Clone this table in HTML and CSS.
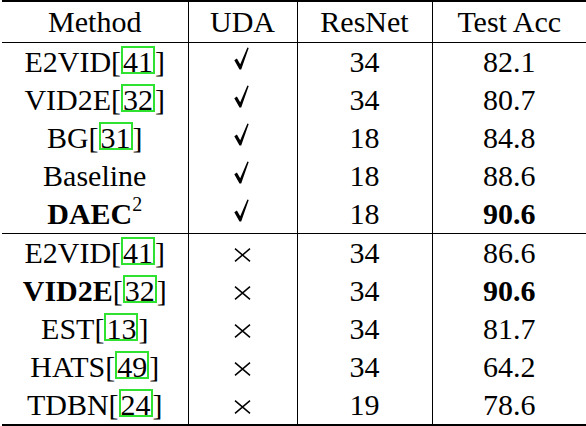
FILE: index.html
```html
<!DOCTYPE html>
<html lang="en">
<head>
    <meta charset="UTF-8">
    <title>Test accuracy</title>
    <link rel="stylesheet" href="styles.css">
</head>
<body>

<!-- Results table -->
<table class="results">
    <colgroup>
        <col class="col-method">
        <col class="col-uda">
        <col class="col-resnet">
        <col class="col-acc">
    </colgroup>
    <thead>
        <tr><th>Method</th><th>UDA</th><th>ResNet</th><th>Test Acc</th></tr>
    </thead>

    <!-- With UDA -->
    <tbody>
        <tr>
            <td>E2VID[<span class="cite">41</span>]</td>
            <td><svg class="tick" width="15" height="23" viewBox="0 0 15 23"><path d="M0.3 13.2 L2.9 11.6 L6.2 17.2 L13.4 0.4 L14.7 1.0 L7.2 22.6 L5.5 22.6 Z"/></svg></td>
            <td>34</td><td>82.1</td>
        </tr>
        <tr>
            <td>VID2E[<span class="cite">32</span>]</td>
            <td><svg class="tick" width="15" height="23" viewBox="0 0 15 23"><path d="M0.3 13.2 L2.9 11.6 L6.2 17.2 L13.4 0.4 L14.7 1.0 L7.2 22.6 L5.5 22.6 Z"/></svg></td>
            <td>34</td><td>80.7</td>
        </tr>
        <tr>
            <td>BG[<span class="cite">31</span>]</td>
            <td><svg class="tick" width="15" height="23" viewBox="0 0 15 23"><path d="M0.3 13.2 L2.9 11.6 L6.2 17.2 L13.4 0.4 L14.7 1.0 L7.2 22.6 L5.5 22.6 Z"/></svg></td>
            <td>18</td><td>84.8</td>
        </tr>
        <tr>
            <td>Baseline</td>
            <td><svg class="tick" width="15" height="23" viewBox="0 0 15 23"><path d="M0.3 13.2 L2.9 11.6 L6.2 17.2 L13.4 0.4 L14.7 1.0 L7.2 22.6 L5.5 22.6 Z"/></svg></td>
            <td>18</td><td>88.6</td>
        </tr>
        <tr>
            <td><b>DAEC</b><sup class="pow">2</sup></td>
            <td><svg class="tick" width="15" height="23" viewBox="0 0 15 23"><path d="M0.3 13.2 L2.9 11.6 L6.2 17.2 L13.4 0.4 L14.7 1.0 L7.2 22.6 L5.5 22.6 Z"/></svg></td>
            <td>18</td><td><b>90.6</b></td>
        </tr>
    </tbody>

    <!-- Without UDA -->
    <tbody>
        <tr>
            <td>E2VID[<span class="cite">41</span>]</td>
            <td><svg class="cross" width="17" height="14" viewBox="0 0 17 14"><path d="M1 0.6 L16 13.4 M16 0.6 L1 13.4"/></svg></td>
            <td>34</td><td>86.6</td>
        </tr>
        <tr>
            <td><b>VID2E</b>[<span class="cite">32</span>]</td>
            <td><svg class="cross" width="17" height="14" viewBox="0 0 17 14"><path d="M1 0.6 L16 13.4 M16 0.6 L1 13.4"/></svg></td>
            <td>34</td><td><b>90.6</b></td>
        </tr>
        <tr>
            <td>EST[<span class="cite">13</span>]</td>
            <td><svg class="cross" width="17" height="14" viewBox="0 0 17 14"><path d="M1 0.6 L16 13.4 M16 0.6 L1 13.4"/></svg></td>
            <td>34</td><td>81.7</td>
        </tr>
        <tr>
            <td>HATS[<span class="cite">49</span>]</td>
            <td><svg class="cross" width="17" height="14" viewBox="0 0 17 14"><path d="M1 0.6 L16 13.4 M16 0.6 L1 13.4"/></svg></td>
            <td>34</td><td>64.2</td>
        </tr>
        <tr>
            <td>TDBN[<span class="cite">24</span>]</td>
            <td><svg class="cross" width="17" height="14" viewBox="0 0 17 14"><path d="M1 0.6 L16 13.4 M16 0.6 L1 13.4"/></svg></td>
            <td>19</td><td>78.6</td>
        </tr>
    </tbody>
</table>

</body>
</html>
```

FILE: styles.css
```css
* {
    box-sizing: border-box;
}
body {
    margin: 0;
    padding: 0;
    background-color: #ffffff;
    font-family: "Liberation Serif", "Times New Roman", serif;
}

/* Table frame */
.results {
    margin-left: 2px;
    width: 584px;
    table-layout: fixed;
    border-collapse: collapse;
    border-top: 2px solid #000;
    border-bottom: 2px solid #000;
    font-family: "Liberation Serif", "Times New Roman", serif;
    font-size: 30px;
    color: #000;
}
.col-method { width: 186px; }
.col-uda { width: 109px; }
.col-resnet { width: 135px; }
.col-acc { width: 154px; }

.results th,
.results td {
    padding: 0;
    height: 38px;
    line-height: 38px;
    font-weight: normal;
    text-align: center;
    white-space: nowrap;
    border-left: 1px solid #000;
}
.results th:first-child,
.results td:first-child {
    border-left: none;
}
.results b {
    font-weight: bold;
}

/* Header */
.results thead th {
    height: 41px;
    line-height: 38px;
    border-bottom: 1px solid #000;
}

/* Split between the two groups */
.results tbody + tbody tr:first-child td {
    border-top: 1px solid #000;
}

/* Green citation link boxes */
.cite {
    display: inline-block;
    line-height: 20px;
    padding-top: 4px;
    border: 2px solid #2fe22f;
}

.pow {
    font-size: 20px;
    line-height: 0;
    vertical-align: 13px;
}

/* Check and cross marks */
.tick {
    vertical-align: 2px;
    margin-left: -3px;
    fill: #000;
}
.cross {
    vertical-align: 1px;
    margin-left: -1px;
    fill: none;
    stroke: #000;
    stroke-width: 1.5;
}
```
